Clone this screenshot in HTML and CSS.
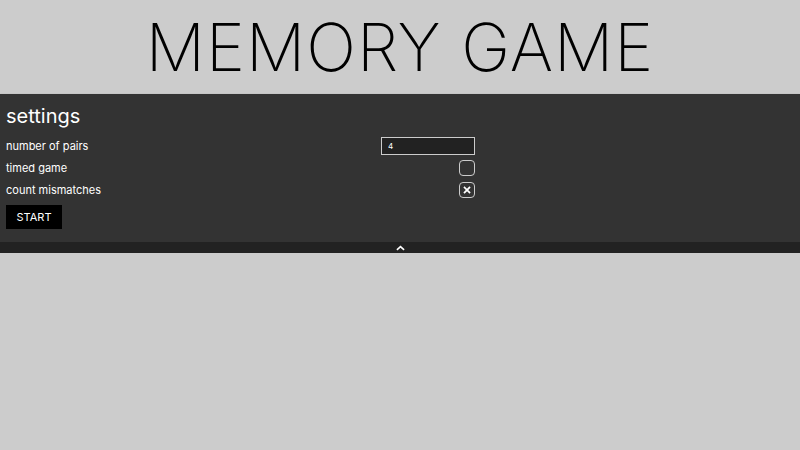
FILE: index.html
```html
<!DOCTYPE html>
<html lang="en">
<head>
  <meta charset="UTF-8">
  <title>Memory Game</title>
  <meta name="viewport" content="width=device-width, initial-scale=1">
  <link rel="stylesheet" href="styles.css">
</head>
<body>

<header class="title-bar">
  <h1>MEMORY GAME</h1>
</header>

<section class="settings">
  <div class="settings-body">
    <h2>settings</h2>
    <form class="settings-form">
      <label for="pairs">number of pairs</label>
      <input id="pairs" class="text-input" type="text" value="4">

      <label for="timed">timed game</label>
      <span class="check" id="timed"></span>

      <label for="mismatch">count mismatches</label>
      <span class="check checked" id="mismatch">
        <svg viewBox="0 0 10 10" width="8" height="8">
          <path d="M2 2 L8 8 M8 2 L2 8" stroke="#fff" stroke-width="2.2" stroke-linecap="square"/>
        </svg>
      </span>
    </form>
    <button class="start" type="button">START</button>
  </div>
  <div class="collapse">
    <svg viewBox="0 0 10 6" width="9" height="6">
      <path d="M1 5 L5 1.5 L9 5" fill="none" stroke="#fff" stroke-width="1.8"/>
    </svg>
  </div>
</section>

</body>
</html>
```

FILE: styles.css
```css
body {
  margin: 0;
  background-color: #cccccc;
  font-family: Inter, 'Open Sans', sans-serif;
  color: #fff;
}
.title-bar {
  height: 94px;
  display: flex;
  align-items: center;
  justify-content: center;
}
.title-bar h1 {
  margin: 0;
  font-weight: 200;
  font-size: 66px;
  letter-spacing: 1px;
  color: #000;
  line-height: 1;
}
.settings {
  background-color: #333333;
  box-shadow: 0 1px 2px rgba(0, 0, 0, 0.4);
}
.settings-body {
  padding: 8px 6px 13px;
}
.settings h2 {
  margin: 0 0 7px;
  font-weight: 400;
  font-size: 20px;
  line-height: 28px;
}
.settings-form {
  display: grid;
  grid-template-columns: 375px 94px;
  row-gap: 4px;
  align-items: center;
  font-size: 11px;
}
.settings-form label {
  line-height: 18px;
}
.text-input {
  justify-self: end;
  box-sizing: border-box;
  width: 94px;
  height: 18px;
  padding: 0 6px;
  background-color: #222;
  border: 1px solid #ccc;
  color: #fff;
  font-family: inherit;
  font-size: 8px;
}
.check {
  justify-self: end;
  box-sizing: border-box;
  width: 16px;
  height: 16px;
  border: 1px solid #ccc;
  border-radius: 4px;
  display: flex;
  align-items: center;
  justify-content: center;
}
.start {
  margin-top: 6px;
  width: 56px;
  height: 24px;
  background-color: #000;
  border: none;
  color: #fff;
  font-family: inherit;
  font-size: 11px;
  cursor: pointer;
}
.collapse {
  height: 11px;
  background-color: #222222;
  display: flex;
  align-items: center;
  justify-content: center;
}
```
